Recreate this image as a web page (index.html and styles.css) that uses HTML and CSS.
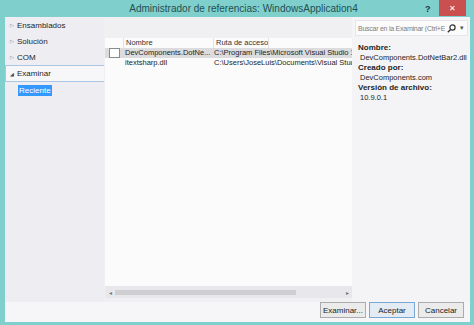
FILE: index.html
```html
<!DOCTYPE html>
<html lang="es">
<head>
    <meta charset="UTF-8">
    <title>Administrador de referencias</title>
    <link rel="stylesheet" href="styles.css">
</head>
<body>
    <div class="window">
        <div class="titlebar">
            <span class="title">Administrador de referencias: WindowsApplication4</span>
            <span class="help">?</span>
            <span class="close">&#x2715;</span>
        </div>
        <div class="client">
            <div class="main">
                <div class="sidebar">
                    <div class="nav-item"><span class="arrow">&#x25B7;</span>Ensamblados</div>
                    <div class="nav-item"><span class="arrow">&#x25B7;</span>Solución</div>
                    <div class="nav-item"><span class="arrow">&#x25B7;</span>COM</div>
                    <div class="nav-item selected"><span class="arrow open">&#x25E2;</span>Examinar</div>
                    <div class="sub-item"><span class="hl">Reciente</span></div>
                </div>

                <div class="center">
                    <div class="toolbar"></div>
                    <div class="list">
                        <div class="list-head">
                            <span class="col-check"></span>
                            <span class="col-name">Nombre</span>
                            <span class="col-path">Ruta de acceso</span>
                        </div>
                        <div class="row active">
                            <span class="col-check"><span class="checkbox"></span></span>
                            <span class="col-name">DevComponents.DotNe...</span>
                            <span class="col-path">C:\Program Files\Microsoft Visual Studio 11.</span>
                        </div>
                        <div class="row">
                            <span class="col-check"></span>
                            <span class="col-name">itextsharp.dll</span>
                            <span class="col-path">C:\Users\JoseLuis\Documents\Visual Studio</span>
                        </div>
                        <div class="list-fill"></div>
                        <div class="hscroll">
                            <span class="sarrow">&#x25C2;</span>
                            <span class="track"><span class="thumb"></span></span>
                            <span class="sarrow">&#x25B8;</span>
                        </div>
                    </div>
                </div>

                <div class="details">
                    <div class="search">
                        <span class="search-text">Buscar en la Examinar (Ctrl+E</span>
                        <svg class="search-icon" width="9" height="9" viewBox="0 0 9 9">
                            <circle cx="5.5" cy="3.5" r="2.6" fill="none" stroke="#333" stroke-width="1.2"/>
                            <line x1="3.6" y1="5.4" x2="0.8" y2="8.2" stroke="#333" stroke-width="1.4"/>
                        </svg>
                        <span class="drop">&#x25BE;</span>
                    </div>
                    <div class="info">
                        <div class="info-label">Nombre:</div>
                        <div class="info-value">DevComponents.DotNetBar2.dll</div>
                        <div class="info-label">Creado por:</div>
                        <div class="info-value">DevComponents.com</div>
                        <div class="info-label">Versión de archivo:</div>
                        <div class="info-value">10.9.0.1</div>
                    </div>
                </div>
            </div>

            <div class="footer">
                <button class="btn">Examinar...</button>
                <button class="btn default">Aceptar</button>
                <button class="btn">Cancelar</button>
            </div>
        </div>
    </div>
</body>
</html>
```

FILE: styles.css
```css
html, body {
    margin: 0;
    padding: 0;
}
body {
    width: 474px;
    height: 325px;
    background-color: #7fd0cd;
    font-family: 'Liberation Sans', Arial, sans-serif;
    font-size: 8px;
    color: #1e1e1e;
    overflow: hidden;
}
.window {
    height: 325px;
    display: flex;
    flex-direction: column;
}
.titlebar {
    height: 17px;
    display: flex;
    align-items: center;
}
.title {
    flex: 1;
    text-align: center;
    font-size: 10px;
    color: #1f4f52;
    padding-left: 62px;
}
.help {
    width: 10px;
    font-size: 9px;
    font-weight: bold;
    color: #234;
    margin-right: 4px;
}
.close {
    width: 27px;
    height: 16px;
    margin-top: -1px;
    margin-right: 8px;
    background-color: #c9504f;
    color: white;
    font-size: 8px;
    display: flex;
    align-items: center;
    justify-content: center;
}
.client {
    flex: 1;
    margin: 0 4px 3px 5px;
    background-color: #f6f6f8;
    display: flex;
    flex-direction: column;
}
.main {
    flex: 1;
    display: flex;
    min-height: 0;
}
.sidebar {
    width: 99px;
    flex-shrink: 0;
    background-color: #eeeef2;
}
.nav-item {
    height: 16px;
    display: flex;
    align-items: center;
    padding-left: 5px;
    box-sizing: border-box;
}
.nav-item.selected {
    border: 1px solid #a9c7e4;
    background-color: #f7f7f9;
    padding-left: 4px;
    margin-right: -1px;
    height: 17px;
}
.arrow {
    font-size: 5px;
    color: #777;
    width: 5px;
    margin-right: 2px;
}
.arrow.open {
    color: #444;
}
.sub-item {
    padding: 3px 0 0 13px;
}
.hl {
    display: inline-block;
    background-color: #3399ff;
    color: white;
    padding: 1px 1px;
}
.center {
    width: 248px;
    flex-shrink: 0;
    display: flex;
    flex-direction: column;
    background-color: #f0f0f3;
}
.toolbar {
    height: 21px;
}
.list {
    flex: 1;
    display: flex;
    flex-direction: column;
    background-color: #fbfbfb;
    margin-left: 1px;
    margin-bottom: 4px;
}
.list-head, .row {
    display: flex;
    height: 10px;
    line-height: 10px;
    white-space: nowrap;
    overflow: hidden;
    font-size: 7.5px;
}
.list-head {
    color: #333;
}
.list-head span {
    border-right: 1px solid #e2e2e2;
}
.row.active {
    background-color: #dcdcde;
}
.col-check {
    width: 18px;
    flex-shrink: 0;
    display: flex;
    align-items: center;
    justify-content: center;
}
.col-name {
    width: 87px;
    flex-shrink: 0;
    padding-left: 2px;
    overflow: hidden;
}
.col-path {
    padding-left: 2px;
    overflow: hidden;
}
.checkbox {
    width: 9px;
    height: 8px;
    border: 1px solid #8a8a8a;
    background-color: white;
}
.list-fill {
    flex: 1;
}
.hscroll {
    height: 12px;
    background-color: #e8e8ec;
    display: flex;
    align-items: center;
}
.sarrow {
    width: 10px;
    text-align: center;
    font-size: 6px;
    color: #777;
}
.track {
    flex: 1;
    height: 5px;
    margin-right: 46px;
}
.thumb {
    display: block;
    height: 5px;
    background-color: #cfcfd3;
}
.details {
    flex: 1;
    min-width: 0;
    background-color: #f4f4f6;
}
.search {
    margin: 3px 2px 0 3px;
    height: 16px;
    display: flex;
    align-items: center;
    background-color: #fbfbfb;
    border: 1px solid #e6e6e9;
    box-sizing: border-box;
    padding-left: 2px;
}
.search-text {
    flex: 1;
    min-width: 0;
    font-size: 7px;
    letter-spacing: -0.25px;
    color: #7d7d7d;
    white-space: nowrap;
    overflow: hidden;
}
.search-icon {
    margin: 0 4px 0 2px;
    flex-shrink: 0;
}
.drop {
    font-size: 7px;
    color: #555;
    margin-right: 3px;
}
.info {
    padding: 7px 0 0 6px;
    line-height: 10px;
}
.info-label {
    font-weight: bold;
}
.info-value {
    padding-left: 2px;
    font-size: 7.5px;
}
.footer {
    height: 20px;
    display: flex;
    justify-content: flex-end;
    align-items: flex-start;
    padding-right: 6px;
    gap: 3px;
}
.btn {
    font-family: inherit;
    font-size: 8px;
    height: 16px;
    width: 46px;
    padding: 0;
    background-color: #ebebeb;
    border: 1px solid #acacac;
    color: #222;
}
.btn.default {
    background-color: #e3ecf4;
    border-color: #7aa9d6;
}
```
